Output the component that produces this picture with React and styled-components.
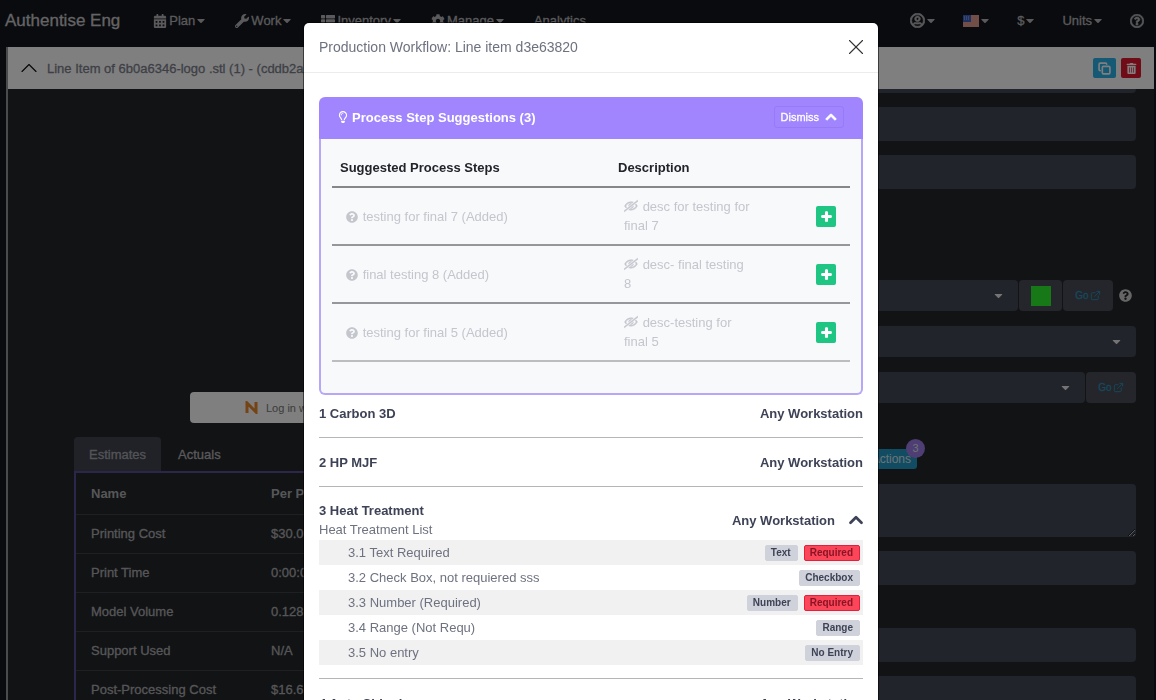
import React, { useState } from "react";
import styled, { createGlobalStyle } from "styled-components";
import {
  FaCalendarAlt,
  FaWrench,
  FaThList,
  FaCog,
  FaRegUserCircle,
  FaCaretDown,
  FaQuestionCircle,
  FaRegQuestionCircle,
  FaRegLightbulb,
  FaRegEyeSlash,
  FaPlus,
  FaTrashAlt,
  FaChevronUp,
} from "react-icons/fa";
import { FiExternalLink } from "react-icons/fi";
import { ChevronUp, Copy, X } from "lucide-react";

const suggestions = [
  { name: "testing for final 7 (Added)", desc: "desc for testing for final 7" },
  { name: "final testing 8 (Added)", desc: "desc- final testing 8" },
  { name: "testing for final 5 (Added)", desc: "desc-testing for final 5" },
];

const fields = [
  { label: "3.1 Text Required", type: "Text", required: true },
  { label: "3.2 Check Box, not requiered sss", type: "Checkbox" },
  { label: "3.3 Number (Required)", type: "Number", required: true },
  { label: "3.4 Range (Not Requ)", type: "Range" },
  { label: "3.5 No entry", type: "No Entry" },
];

const estimates = [
  ["Printing Cost", "$30.00"],
  ["Print Time", "0:00:00"],
  ["Model Volume", "0.128"],
  ["Support Used", "N/A"],
  ["Post-Processing Cost", "$16.67"],
];

function Navbar() {
  return (
    <Nav>
      <Brand href="#">Authentise Eng</Brand>
      <NavGroup>
        <NavItem><FaCalendarAlt size={14} />Plan<Caret /></NavItem>
        <NavItem><FaWrench size={14} />Work<Caret /></NavItem>
        <NavItem><FaThList size={14} />Inventory<Caret /></NavItem>
        <NavItem><FaCog size={14} />Manage<Caret /></NavItem>
        <NavItem>Analytics</NavItem>
      </NavGroup>
      <NavGroup $right>
        <NavItem aria-label="Account"><FaRegUserCircle size={15} stroke="currentColor" strokeWidth={24} /><Caret /></NavItem>
        <NavItem aria-label="Language"><Flag /><Caret /></NavItem>
        <NavItem>$<Caret /></NavItem>
        <NavItem>Units<Caret /></NavItem>
        <NavItem aria-label="Help"><FaRegQuestionCircle size={14} stroke="currentColor" strokeWidth={24} /></NavItem>
      </NavGroup>
    </Nav>
  );
}

function Flag() {
  return (
    <svg width="16" height="12" viewBox="0 0 16 12">
      <rect width="16" height="12" fill="#f0d8d4" />
      <path d="M0 1h16M0 3h16M0 5h16M0 7h16M0 9h16M0 11h16" stroke="#d8624f" />
      <rect width="8" height="7" fill="#3c62c4" />
      <path d="M1 2h6M1 4h6" stroke="#a9bdf0" strokeDasharray="1 1" />
    </svg>
  );
}

function Estimates() {
  return (
    <Viewer>
      <LoginButton>
        <svg width="13" height="13" viewBox="0 0 13 13">
          <path d="M2 12V2l9 9V1" fill="none" stroke="#e8882c" strokeWidth="3" />
        </svg>
        Log in with nTop
      </LoginButton>
      <Tabs>
        <Tab $active>Estimates</Tab>
        <Tab>Actuals</Tab>
      </Tabs>
      <TableBox>
        <EstimateTable>
          <thead>
            <tr>
              <th>Name</th>
              <th>Per Part</th>
            </tr>
          </thead>
          <tbody>
            {estimates.map(([name, value]) => (
              <tr key={name}>
                <td>{name}</td>
                <td>{value}</td>
              </tr>
            ))}
          </tbody>
        </EstimateTable>
      </TableBox>
    </Viewer>
  );
}

function DetailsForm() {
  return (
    <Form>
      <Field aria-label="Name" $clipped />
      <Field aria-label="Part number" />
      <Field aria-label="Quantity" $space={91} />
      <InputGroup>
        <SelectBox>
          <Select aria-label="Material" />
          <FaCaretDown size={13} />
        </SelectBox>
        <Addon $w={43}><Swatch /></Addon>
        <Addon $w={50}><GoLink href="#">Go<FiExternalLink size={11} /></GoLink></Addon>
        <HelpIcon><FaQuestionCircle size={13} /></HelpIcon>
      </InputGroup>
      <InputGroup>
        <SelectBox>
          <Select aria-label="Shipping" />
          <FaCaretDown size={13} />
        </SelectBox>
      </InputGroup>
      <InputGroup>
        <SelectBox>
          <Select aria-label="Workflow" />
          <FaCaretDown size={13} />
        </SelectBox>
        <Addon $w={50}><GoLink href="#">Go<FiExternalLink size={11} /></GoLink></Addon>
      </InputGroup>
      <ActionRow>
        <ActionButton>
          Workflow Actions
          <Count>3</Count>
        </ActionButton>
      </ActionRow>
      <Notes aria-label="Notes" />
      <Field aria-label="Reference" $space={43} />
      <Field aria-label="Due date" />
      <Field aria-label="Priority" />
    </Form>
  );
}

function Suggestions() {
  return (
    <Card>
      <CardHead>
        <CardTitle><FaRegLightbulb size={12} />Process Step Suggestions (3)</CardTitle>
        <Dismiss>Dismiss<FaChevronUp size={12} stroke="currentColor" strokeWidth={40} /></Dismiss>
      </CardHead>
      <CardBody>
        <StepTable>
          <thead>
            <tr>
              <th>Suggested Process Steps</th>
              <th>Description</th>
              <th></th>
            </tr>
          </thead>
          <tbody>
            {suggestions.map((s) => (
              <tr key={s.name}>
                <td><FaQuestionCircle size={12} /> {s.name}</td>
                <td><Desc><HiddenIcon size={14} stroke="currentColor" strokeWidth={24} /> {s.desc}</Desc></td>
                <td><AddButton aria-label="Add step"><FaPlus size={11} stroke="currentColor" strokeWidth={50} /></AddButton></td>
              </tr>
            ))}
          </tbody>
        </StepTable>
      </CardBody>
    </Card>
  );
}

function App() {
  const [open, setOpen] = useState(true);

  return (
    <Page>
      <GlobalStyle />
      <Navbar />
      <Panel>
        <PanelHead>
          <ChevronUp size={28} strokeWidth={1} color="#111" />
          <PanelTitle>Line Item of 6b0a6346-logo .stl (1) - (cddb2a10)</PanelTitle>
          <IconButton aria-label="Duplicate" $color="#2bb3ea" $w={23}><Copy size={13} strokeWidth={3} /></IconButton>
          <IconButton aria-label="Delete" $color="#e0182f" $w={20}><FaTrashAlt size={11} /></IconButton>
        </PanelHead>
        <PanelBody>
          <Estimates />
          <DetailsForm />
        </PanelBody>
      </Panel>
      {open && (
        <Backdrop>
          <Modal role="dialog" aria-labelledby="modal-title">
            <ModalHead>
              <ModalTitle id="modal-title">Production Workflow: Line item d3e63820</ModalTitle>
              <Close aria-label="Close" onClick={() => setOpen(false)}><X size={26} strokeWidth={1} /></Close>
            </ModalHead>
            <ModalBody>
              <Suggestions />
              <Step><b>1 Carbon 3D</b><b>Any Workstation</b></Step>
              <Step><b>2 HP MJF</b><b>Any Workstation</b></Step>
              <StepGroup>
                <StepHead>
                  <div>
                    <b>3 Heat Treatment</b>
                    <Sub>Heat Treatment List</Sub>
                  </div>
                  <Toggle>Any Workstation<ChevronUp size={22} strokeWidth={3} /></Toggle>
                </StepHead>
                <FieldList>
                  {fields.map((f) => (
                    <FieldRow key={f.label}>
                      <span>{f.label}</span>
                      <Badge>{f.type}</Badge>
                      {f.required && <Badge $required>Required</Badge>}
                    </FieldRow>
                  ))}
                </FieldList>
              </StepGroup>
              <Step><b>4 Auto Shipping</b><b>Any Workstation</b></Step>
            </ModalBody>
          </Modal>
        </Backdrop>
      )}
    </Page>
  );
}

const GlobalStyle = createGlobalStyle`
  * {
    box-sizing: border-box;
  }
  body {
    margin: 0;
    background: #14161c;
    font-family: "Liberation Sans", Arial, sans-serif;
    font-size: 13px;
  }
  button, input, select, textarea {
    font: inherit;
    border: 0;
    padding: 0;
  }
  svg {
    flex-shrink: 0;
  }
`;

const Page = styled.div`
  height: 100vh;
  overflow: hidden;
  display: flex;
  flex-direction: column;
`;

const Nav = styled.nav`
  height: 47px;
  flex-shrink: 0;
  padding: 0 12px 6px 5px;
  display: flex;
  align-items: center;
`;

const Brand = styled.a`
  color: #c8c8cc;
  font-size: 17px;
  text-decoration: none;
  margin-right: 33px;
  -webkit-text-stroke: 0.3px;
`;

const NavGroup = styled.div`
  display: flex;
  gap: ${(p) => (p.$right ? 28 : 30)}px;
  margin-left: ${(p) => (p.$right ? "auto" : "0")};
`;

const NavItem = styled.button`
  display: flex;
  align-items: center;
  gap: 2px;
  background: none;
  color: #b4b4b8;
  font-size: 13px;
  -webkit-text-stroke: 0.3px;
`;

const Caret = styled(FaCaretDown)`
  width: 8px;
  height: 13px;
`;

const Panel = styled.section`
  flex: 1;
  min-height: 0;
  margin: 0 2px 0 6px;
  display: flex;
  flex-direction: column;
  border-left: 2px solid #94969a;
`;

const PanelHead = styled.header`
  height: 42px;
  flex-shrink: 0;
  padding: 0 13px 0 7px;
  display: flex;
  align-items: center;
  background: #fff;
`;

const PanelTitle = styled.span`
  flex: 1;
  margin-left: 4px;
  color: #7c7f8c;
  -webkit-text-stroke: 0.3px;
`;

const IconButton = styled.button`
  width: ${(p) => p.$w}px;
  height: 20px;
  margin-left: 5px;
  display: grid;
  place-items: center;
  border-radius: 2px;
  background: ${(p) => p.$color};
  color: #fff;
`;

const PanelBody = styled.div`
  flex: 1;
  min-height: 0;
  display: flex;
  background: #232629;
`;

const Viewer = styled.div`
  flex: 1;
  padding: 303px 66px 0;
  display: flex;
  flex-direction: column;
`;

const LoginButton = styled.button`
  align-self: center;
  width: 266px;
  height: 31px;
  flex-shrink: 0;
  margin-bottom: 14px;
  padding-left: 55px;
  display: flex;
  align-items: center;
  gap: 8px;
  border-radius: 4px;
  background: #fff;
  color: #777;
  font-size: 11px;
`;

const Tabs = styled.div`
  display: flex;
  gap: 2px;
`;

const Tab = styled.button`
  height: 34px;
  padding: 0 15px;
  border-radius: 4px 4px 0 0;
  background: ${(p) => (p.$active ? "#40444f" : "none")};
  color: ${(p) => (p.$active ? "#a6a8ae" : "#b4b4b8")};
  -webkit-text-stroke: 0.3px;
`;

const TableBox = styled.div`
  border: 2px solid #5a4d98;
  border-bottom: 0;
`;

const EstimateTable = styled.table`
  width: 100%;
  border-collapse: collapse;
  table-layout: fixed;
  color: #adadb1;

  th, td {
    height: 39px;
    padding: 0 15px;
    text-align: left;
    border-bottom: 1px solid #3c4046;
  }
  td {
    -webkit-text-stroke: 0.3px;
  }
  th {
    height: 41px;
  }
  th:first-child {
    width: 180px;
  }
`;

const Form = styled.form`
  flex: 1;
  padding-right: 18px;
  display: flex;
  flex-direction: column;
`;

const Field = styled.input`
  width: 100%;
  height: ${(p) => (p.$clipped ? 4 : 34)}px;
  flex-shrink: 0;
  margin-bottom: ${(p) => p.$space || 14}px;
  border-radius: ${(p) => (p.$clipped ? "0 0 4px 4px" : "4px")};
  background: #424854;
`;

const InputGroup = styled.div`
  height: 31px;
  flex-shrink: 0;
  margin-bottom: 15px;
  display: flex;
  gap: 1px;
`;

const SelectBox = styled.div`
  flex: 1;
  display: flex;
  align-items: center;
  padding-right: 13px;
  border-radius: 4px;
  background: #424854;
  color: #e8e8e8;
`;

const Select = styled.select`
  flex: 1;
  height: 100%;
  appearance: none;
  background: none;
`;

const Addon = styled.div`
  width: ${(p) => p.$w}px;
  display: grid;
  place-items: center;
  border-radius: 4px;
  background: #4a4c58;
`;

const Swatch = styled.span`
  width: 20px;
  height: 20px;
  background: #2cf02c;
`;

const GoLink = styled.a`
  display: flex;
  align-items: center;
  gap: 1px;
  color: #2b91b8;
  font-size: 10px;
  text-decoration: none;
  -webkit-text-stroke: 0.3px;
`;

const HelpIcon = styled.span`
  width: 22px;
  display: grid;
  place-items: center;
  color: #ccc;
`;

const ActionRow = styled.div`
  height: 20px;
  flex-shrink: 0;
  margin: 31px 0 15px;
  padding-left: 148px;
`;

const ActionButton = styled.button`
  position: relative;
  width: 131px;
  height: 20px;
  padding-right: 6px;
  border-radius: 3px;
  background: #2498c4;
  color: #d8e8f0;
  font-size: 12px;
  text-align: right;
`;

const Count = styled.span`
  position: absolute;
  top: -10px;
  right: -8px;
  width: 19px;
  height: 19px;
  border-radius: 50%;
  background: #9c7ce8;
  font-size: 11px;
  line-height: 19px;
  text-align: center;
`;

const Notes = styled.textarea`
  height: 53px;
  flex-shrink: 0;
  margin-bottom: 14px;
  border-radius: 4px;
  background: #424854;
  color-scheme: dark;
`;

const Backdrop = styled.div`
  position: fixed;
  inset: 0;
  padding: 23px 0 0 26px;
  overflow: hidden;
  background: rgba(0, 0, 0, 0.5);
`;

const Modal = styled.div`
  max-width: 574px;
  margin: 0 auto;
  border-radius: 5px;
  background: #fff;
  color: #3d4256;
  box-shadow: 0 0 0 1px #0008;
`;

const ModalHead = styled.header`
  height: 50px;
  padding: 0 9px 1px 15px;
  display: flex;
  align-items: center;
  justify-content: space-between;
  border-bottom: 1px solid #ececee;
`;

const ModalTitle = styled.h2`
  margin: 0;
  color: #6e7280;
  font-size: 14px;
  font-weight: normal;
`;

const Close = styled.button`
  display: flex;
  background: none;
  color: #333;
`;

const ModalBody = styled.div`
  padding: 24px 15px;
`;

const Card = styled.section`
  margin-bottom: -6px;
`;

const CardHead = styled.header`
  height: 42px;
  padding: 0 19px 2px 18px;
  display: flex;
  align-items: center;
  justify-content: space-between;
  border-radius: 6px 6px 0 0;
  background: #a085ff;
  color: #fff;
`;

const CardTitle = styled.b`
  display: flex;
  align-items: center;
  gap: 3px;
`;

const Dismiss = styled.button`
  height: 22px;
  padding: 0 6px;
  display: flex;
  align-items: center;
  gap: 6px;
  border: 1px solid #967af6;
  border-radius: 3px;
  background: none;
  color: #fff;
  font-size: 11px;
  -webkit-text-stroke: 0.3px;
`;

const CardBody = styled.div`
  padding: 8px 11px 31px;
  border: solid #b8a6f6;
  border-width: 0 2px 2px;
  border-radius: 0 0 6px 6px;
  background: #f8f9fb;
`;

const StepTable = styled.table`
  width: 100%;
  border-collapse: collapse;
  table-layout: fixed;
  color: #c4c6cd;

  th {
    height: 40px;
    padding: 2px 8px 0;
    text-align: left;
    color: #22242a;
    border-bottom: 2px solid #85878b;
  }
  th:first-child {
    width: 278px;
  }
  th:last-child {
    width: 80px;
  }
  td {
    height: 58px;
    padding: 0 14px;
    line-height: 19px;
    border-bottom: 2px solid #95979b;
  }
  td:last-child {
    text-align: right;
  }
  tr:last-child td {
    border-bottom-color: #bbbdc1;
  }
  svg {
    margin-right: 1px;
    vertical-align: -2px;
  }
`;

const Desc = styled.div`
  width: 130px;
`;

const HiddenIcon = styled(FaRegEyeSlash)`
  transform: scaleX(-1);
`;

const AddButton = styled.button`
  width: 20px;
  height: 21px;
  border-radius: 2px;
  background: #1fc583;
  color: #fff;

  && svg {
    margin: 0;
    vertical-align: -1px;
  }
`;

const Step = styled.div`
  height: 49px;
  display: flex;
  align-items: center;
  justify-content: space-between;
  border-bottom: 1px solid #b4b6ba;
`;

const StepGroup = styled.div`
  padding: 14px 0 13px;
  border-bottom: 1px solid #b4b6ba;
`;

const StepHead = styled.div`
  display: flex;
  align-items: center;
  justify-content: space-between;
  line-height: 19px;
`;

const Sub = styled.div`
  color: #6e7280;
`;

const Toggle = styled.button`
  display: flex;
  align-items: center;
  gap: 10px;
  background: none;
  color: #3d4256;
  font-weight: bold;

  svg {
    margin-right: -4px;
  }
`;

const FieldList = styled.ul`
  margin: 1px 0 0;
  padding: 0;
  list-style: none;
`;

const FieldRow = styled.li`
  height: 25px;
  padding: 0 3px 0 29px;
  display: flex;
  align-items: center;
  gap: 6px;
  color: #6e7280;

  &:nth-child(odd) {
    background: #f1f1f1;
  }
  span:first-child {
    flex: 1;
  }
`;

const Badge = styled.span`
  height: 16px;
  padding: 0 6px 0 5px;
  border-radius: 2px;
  border: 1px solid ${(p) => (p.$required ? "#e0203c" : "#cfd2da")};
  background: ${(p) => (p.$required ? "#fa4658" : "#cfd2da")};
  color: ${(p) => (p.$required ? "#8a1426" : "#3d4256")};
  font-size: 10px;
  font-weight: bold;
  line-height: 14px;
`;

export default App;
